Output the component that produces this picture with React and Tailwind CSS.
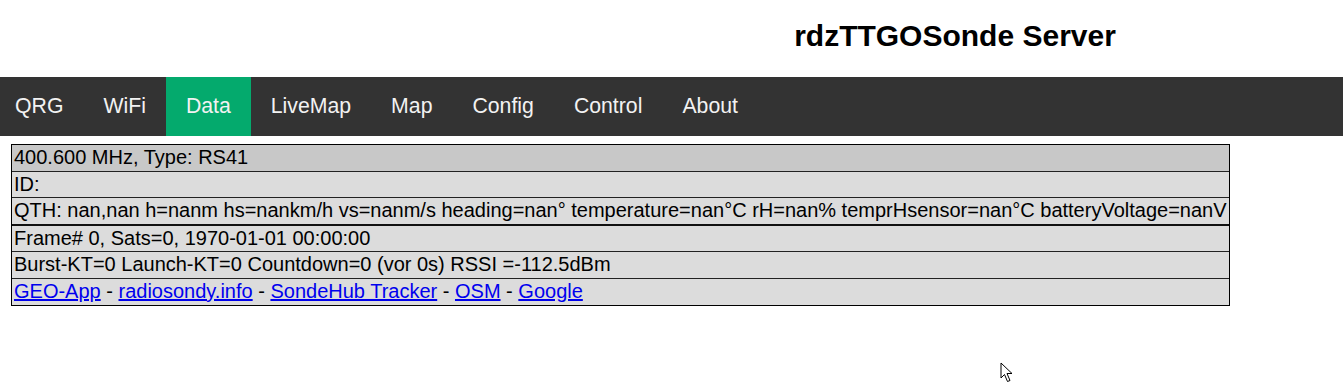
import React from "react";

const tabs = ["QRG", "WiFi", "Data", "LiveMap", "Map", "Config", "Control", "About"];

const links = [
  { label: "GEO-App", href: "#" },
  { label: "radiosondy.info", href: "#" },
  { label: "SondeHub Tracker", href: "#" },
  { label: "OSM", href: "#" },
  { label: "Google", href: "#" },
];

export default function App() {
  return (
    <div className="w-[1343px] h-[388px] bg-white text-black font-['Liberation_Sans',Arial,sans-serif] relative">
      {/* header */}
      <div className="flex h-[77px]">
        <div className="w-[567px]" />
        <h1 className="flex-1 text-center text-[30px] font-bold leading-none pt-[21px]">rdzTTGOSonde Server</h1>
      </div>

      {/* nav */}
      <div className="flex h-[59px] bg-[#333333]">
        {tabs.map((t, i) => (
          <a
            key={t}
            href="#"
            className={
              "flex items-center text-[21.25px] text-[#f2f2f2] pr-[20px] " +
              (i === 0 ? "pl-[15px] " : "pl-[20px] ") +
              (t === "Data" ? "bg-[#04AA6D]" : "")
            }
          >
            {t}
          </a>
        ))}
      </div>

      {/* sonde data */}
      <div className="pl-[11px] pt-[8px]">
        <div className="inline-block border-[1.5px] border-black text-[20px] leading-[25.6px]">
          <div className="bg-[#c8c8c8] px-[2px] border-b border-[#222]">400.600 MHz, Type: RS41</div>
          <div className="bg-[#dcdcdc] px-[2px] border-b border-[#222]">ID:</div>
          <div className="bg-[#dcdcdc] px-[2px] border-b-2 border-[#111] whitespace-nowrap">
            QTH: nan,nan h=nanm hs=nankm/h vs=nanm/s heading=nan° temperature=nan°C rH=nan% temprHsensor=nan°C batteryVoltage=nanV
          </div>
          <div className="bg-[#dcdcdc] px-[2px] border-b border-[#222]">Frame# 0, Sats=0, 1970-01-01 00:00:00</div>
          <div className="bg-[#dcdcdc] px-[2px] border-b border-[#222]">Burst-KT=0 Launch-KT=0 Countdown=0 (vor 0s) RSSI =-112.5dBm</div>
          <div className="bg-[#dcdcdc] px-[2px]">
            {links.map((l, i) => (
              <React.Fragment key={l.label}>
                {i > 0 && " - "}
                <a href={l.href} className="text-[#0000ee] underline">{l.label}</a>
              </React.Fragment>
            ))}
          </div>
        </div>
      </div>

      {/* mouse pointer left in the screenshot */}
      <svg className="absolute left-[1000px] top-[362px]" width="15" height="22" viewBox="0 0 15 22">
        <path d="M1 1 L1 16 L4.5 12.5 L7.5 19.5 L10 18.5 L7 11.5 L12 11.5 Z" fill="#fff" stroke="#000" strokeWidth="1" strokeLinejoin="round" />
      </svg>
    </div>
  );
}
